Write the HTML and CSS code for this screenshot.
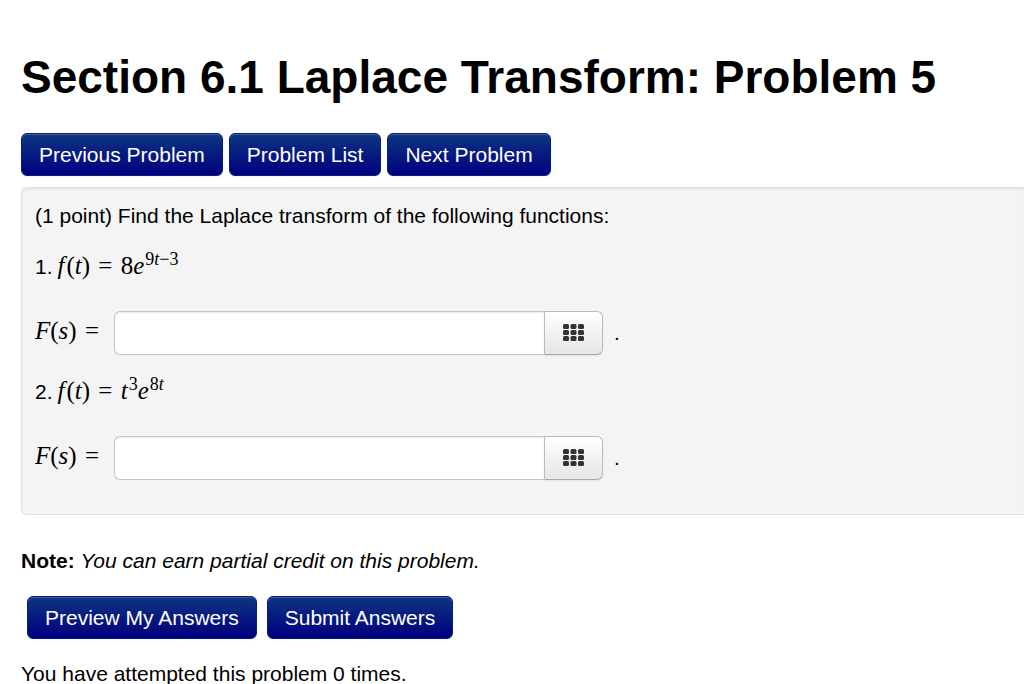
FILE: index.html
```
<!DOCTYPE html>
<html lang="en">
<head>
    <meta charset="UTF-8">
    <meta name="viewport" content="width=device-width, initial-scale=1.0">
    <title>Section 6.1 Laplace Transform: Problem 5</title>
    <link rel="stylesheet" href="styles.css">
</head>
<body>
    <h1>Section 6.1 Laplace Transform: Problem 5</h1>

    <nav class="problem-nav">
        <a class="btn" href="#">Previous Problem</a>
        <a class="btn" href="#">Problem List</a>
        <a class="btn" href="#">Next Problem</a>
    </nav>

    <form>
        <div class="problem">
            <p class="intro">(1 point) Find the Laplace transform of the following functions:</p>

            <p class="question">1.<span class="math"><i class="fn">f</i>(<i>t</i>) <span class="rel">=</span> 8<i>e</i><sup>9<i>t</i>−3</sup></span></p>
            <div class="answer">
                <label class="math" for="answer1"><i>F</i>(<i>s</i>) <span class="rel">=</span></label>
                <div class="input-group">
                    <input type="text" id="answer1">
                    <button type="button" aria-label="Equation editor">
                        <svg width="22" height="18" viewBox="0 0 22 18" fill="#333">
                            <rect x="0" y="0" width="6" height="5" rx="1.5"/><rect x="7.5" y="0" width="6" height="5" rx="1.5"/><rect x="15" y="0" width="6" height="5" rx="1.5"/>
                            <rect x="0" y="6" width="6" height="5" rx="1.5"/><rect x="7.5" y="6" width="6" height="5" rx="1.5"/><rect x="15" y="6" width="6" height="5" rx="1.5"/>
                            <rect x="0" y="12" width="6" height="5" rx="1.5"/><rect x="7.5" y="12" width="6" height="5" rx="1.5"/><rect x="15" y="12" width="6" height="5" rx="1.5"/>
                        </svg>
                    </button>
                </div>
                <span class="period">.</span>
            </div>

            <p class="question">2.<span class="math"><i class="fn">f</i>(<i>t</i>) <span class="rel">=</span> <i>t</i><sup>3</sup><i>e</i><sup>8<i>t</i></sup></span></p>
            <div class="answer">
                <label class="math" for="answer2"><i>F</i>(<i>s</i>) <span class="rel">=</span></label>
                <div class="input-group">
                    <input type="text" id="answer2">
                    <button type="button" aria-label="Equation editor">
                        <svg width="22" height="18" viewBox="0 0 22 18" fill="#333">
                            <rect x="0" y="0" width="6" height="5" rx="1.5"/><rect x="7.5" y="0" width="6" height="5" rx="1.5"/><rect x="15" y="0" width="6" height="5" rx="1.5"/>
                            <rect x="0" y="6" width="6" height="5" rx="1.5"/><rect x="7.5" y="6" width="6" height="5" rx="1.5"/><rect x="15" y="6" width="6" height="5" rx="1.5"/>
                            <rect x="0" y="12" width="6" height="5" rx="1.5"/><rect x="7.5" y="12" width="6" height="5" rx="1.5"/><rect x="15" y="12" width="6" height="5" rx="1.5"/>
                        </svg>
                    </button>
                </div>
                <span class="period">.</span>
            </div>
        </div>

        <p class="note"><b>Note:</b> <i>You can earn partial credit on this problem.</i></p>

        <div class="submit-buttons">
            <button class="btn" type="submit">Preview My Answers</button>
            <button class="btn" type="submit">Submit Answers</button>
        </div>
    </form>

    <p class="attempts">You have attempted this problem 0 times.</p>
</body>
</html>
```
FILE: styles.css
```
* {
    box-sizing: border-box;
}
body {
    margin: 0;
    padding: 47px 0 0 21px;
    overflow-x: hidden;
    background: #fff;
    color: #000;
    font-family: "Liberation Sans", Arial, sans-serif;
    font-size: 21px;
    line-height: 30px;
}
body::-webkit-scrollbar {
    display: none;
}
h1 {
    margin: 0 0 26px;
    font-size: 46px;
    line-height: 60px;
}
p {
    margin: 0;
}
.problem-nav {
    display: flex;
    gap: 6px;
    margin-bottom: 11px;
}
.btn {
    padding: 6px 17px 5px;
    border: 1px solid #03217a;
    border-radius: 6px;
    background: linear-gradient(#0d3580, #000080);
    box-shadow: inset 0 1px 0 rgba(255, 255, 255, 0.2), 0 1px 2px rgba(0, 0, 0, 0.05);
    color: #fff;
    font-family: inherit;
    font-size: 21px;
    line-height: 30px;
    text-decoration: none;
    cursor: pointer;
}
.problem {
    padding: 13px 13px 34px;
    border: 1px solid #e0e0e0;
    border-right: none;
    border-radius: 6px 0 0 6px;
    background: #f4f4f4;
    box-shadow: inset 0 2px 2px rgba(0, 0, 0, 0.05);
}
.intro {
    margin-bottom: 20px;
}
.question {
    margin-bottom: 29px;
}
.math {
    font-family: "Liberation Serif", "Times New Roman", serif;
    font-size: 25px;
}
.question .math {
    margin-left: 5px;
}
.math .fn {
    margin-right: 2px;
}
.math .rel {
    margin: 0 2px;
}
.math sup {
    margin-left: 1px;
    font-size: 18px;
    line-height: 0;
}
.answer {
    display: flex;
    align-items: center;
}
.answer + .question {
    margin-top: 21px;
}
.answer label {
    width: 79px;
    padding-bottom: 4px;
}
.input-group {
    display: flex;
    width: 489px;
    height: 44px;
}
.input-group input {
    flex: 1;
    min-width: 0;
    padding: 6px 8px;
    border: 1px solid #c4c4c4;
    border-right: none;
    border-radius: 6px 0 0 6px;
    background: #fff;
    box-shadow: inset 0 1px 1px rgba(0, 0, 0, 0.08);
    font: inherit;
}
.input-group button {
    display: flex;
    align-items: center;
    justify-content: center;
    width: 59px;
    padding: 0;
    border: 1px solid #bbb;
    border-bottom-color: #a8a8a8;
    border-radius: 0 6px 6px 0;
    background: linear-gradient(#fff, #e6e6e6);
    box-shadow: 0 1px 2px rgba(0, 0, 0, 0.08);
    cursor: pointer;
}
.period {
    margin-left: 11px;
}
.note {
    margin: 31px 0 20px;
}
.submit-buttons {
    display: flex;
    gap: 10px;
    margin: 0 0 20px 6px;
}
```
